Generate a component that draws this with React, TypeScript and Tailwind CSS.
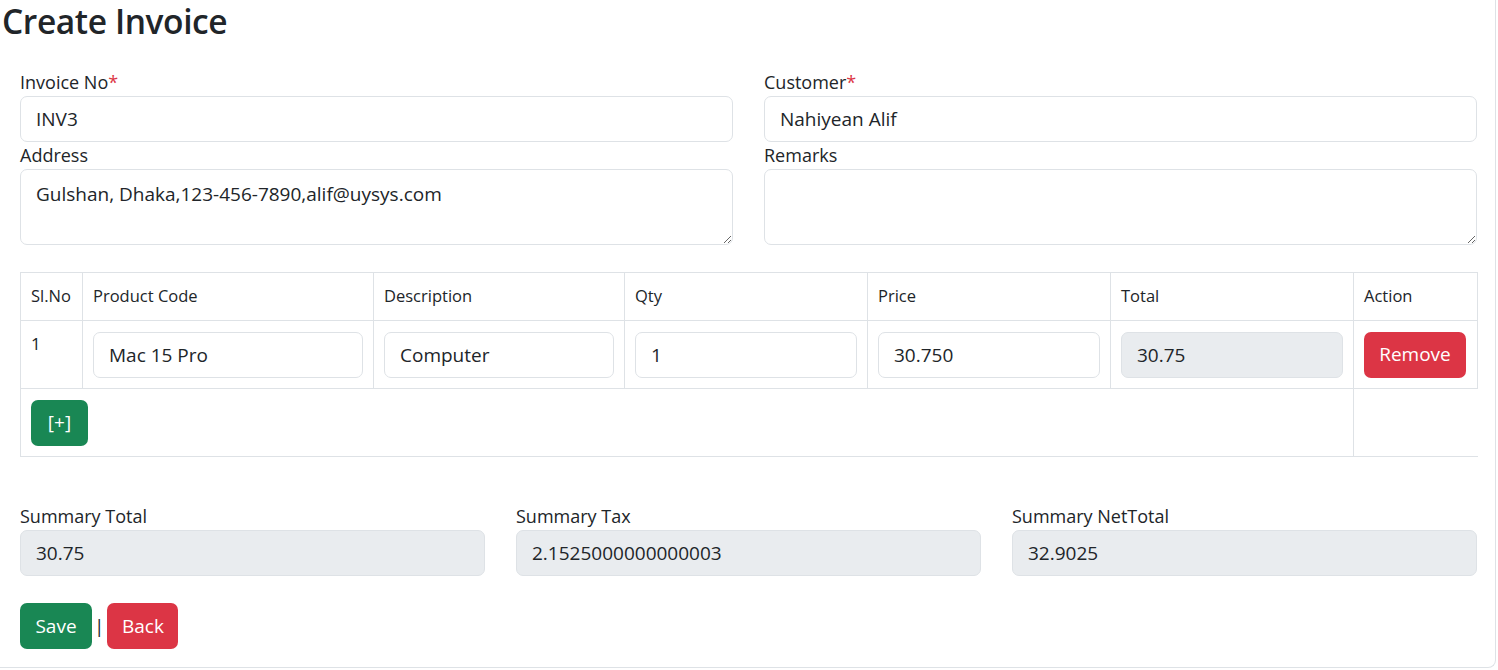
import React from 'react'

const input = 'h-[46px] w-full rounded-[7px] border border-[#dee2e6] bg-white px-[15px] text-[19px] text-[#212529] outline-none'
const disabled = 'h-[46px] w-full rounded-[7px] border border-[#dee2e6] bg-[#e9ecef] px-[15px] text-[19px] text-[#212529] outline-none'
const cell = 'border border-[#dee2e6]'

function Label({ text, required, className = '' }: { text: string; required?: boolean; className?: string }) {
  return (
    <label className={`block text-[18px] ${className}`}>
      {text}
      {required && <span className="text-[#dc3545]">*</span>}
    </label>
  )
}

export default function App() {
  return (
    <div className="h-[670px] w-[1498px] overflow-hidden bg-white font-['Open_Sans',sans-serif] text-[#212529]">
      <div className="h-[668px] w-[1496px] rounded-br-[8px] border-r border-b border-[#dee2e6]">
        <h2 className="pt-[2px] pl-[2px] text-[33.5px] font-semibold leading-[38px] tracking-[-0.4px]">Create Invoice</h2>

        <div className="pl-5 pr-[18px]">
          <div className="mt-[28px] grid grid-cols-2 gap-x-[31px]">
            <div>
              <Label text="Invoice No" required className="leading-[28px]" />
              <input className={input} value="INV3" readOnly />
              <Label text="Address" className="leading-[27px]" />
              <textarea className={`${input} block h-[76px] py-[10px] leading-[28px]`} value="Gulshan, Dhaka,123-456-7890,alif@uysys.com" readOnly />
            </div>
            <div>
              <Label text="Customer" required className="leading-[28px]" />
              <input className={input} value="Nahiyean Alif" readOnly />
              <Label text="Remarks" className="leading-[27px]" />
              <textarea className={`${input} block h-[76px] py-[10px] leading-[28px]`} value="" readOnly />
            </div>
          </div>

          <table className="mt-[27px] w-full table-fixed border-collapse text-[16.5px]">
            <colgroup>
              <col className="w-[62px]" />
              <col className="w-[291px]" />
              <col className="w-[251px]" />
              <col className="w-[243px]" />
              <col className="w-[243px]" />
              <col className="w-[243px]" />
              <col className="w-[124px]" />
            </colgroup>
            <thead>
              <tr className="h-[48px]">
                {['Sl.No', 'Product Code', 'Description', 'Qty', 'Price', 'Total', 'Action'].map((h) => (
                  <th key={h} className={`${cell} px-[10px] text-left font-normal`}>{h}</th>
                ))}
              </tr>
            </thead>
            <tbody>
              <tr className="h-[68px]">
                <td className={`${cell} px-[10px] pt-[9px] align-top text-[17px] leading-[28px]`}>1</td>
                <td className={`${cell} px-[10px]`}><input className={input} value="Mac 15 Pro" readOnly /></td>
                <td className={`${cell} px-[10px]`}><input className={input} value="Computer" readOnly /></td>
                <td className={`${cell} px-[10px]`}><input className={input} value="1" readOnly /></td>
                <td className={`${cell} px-[10px]`}><input className={input} value="30.750" readOnly /></td>
                <td className={`${cell} px-[10px]`}><input className={disabled} value="30.75" readOnly /></td>
                <td className={`${cell} px-[10px]`}>
                  <button className="h-[46px] w-[102px] rounded-[7px] bg-[#dc3545] text-[19px] text-white">Remove</button>
                </td>
              </tr>
              <tr className="h-[68px]">
                <td colSpan={6} className="border-l border-r border-b border-[#dee2e6] px-[10px]">
                  <button className="h-[46px] w-[57px] rounded-[7px] bg-[#198754] text-[19px] text-white">[+]</button>
                </td>
                <td className="border-b border-[#dee2e6]" />
              </tr>
            </tbody>
          </table>

          <div className="mt-[46px] grid grid-cols-3 gap-x-[31px]">
            <div>
              <Label text="Summary Total" className="leading-[27px]" />
              <input className={disabled} value="30.75" readOnly />
            </div>
            <div>
              <Label text="Summary Tax" className="leading-[27px]" />
              <input className={disabled} value="2.1525000000000003" readOnly />
            </div>
            <div>
              <Label text="Summary NetTotal" className="leading-[27px]" />
              <input className={disabled} value="32.9025" readOnly />
            </div>
          </div>

          <div className="mt-[27px] flex items-center text-[19px]">
            <button className="h-[46px] w-[72px] rounded-[7px] bg-[#198754] text-white">Save</button>
            <span className="ml-[2px] mr-[3px] text-[#212529]">|</span>
            <button className="h-[46px] w-[71px] rounded-[7px] bg-[#dc3545] text-white">Back</button>
          </div>
        </div>
      </div>
    </div>
  )
}
